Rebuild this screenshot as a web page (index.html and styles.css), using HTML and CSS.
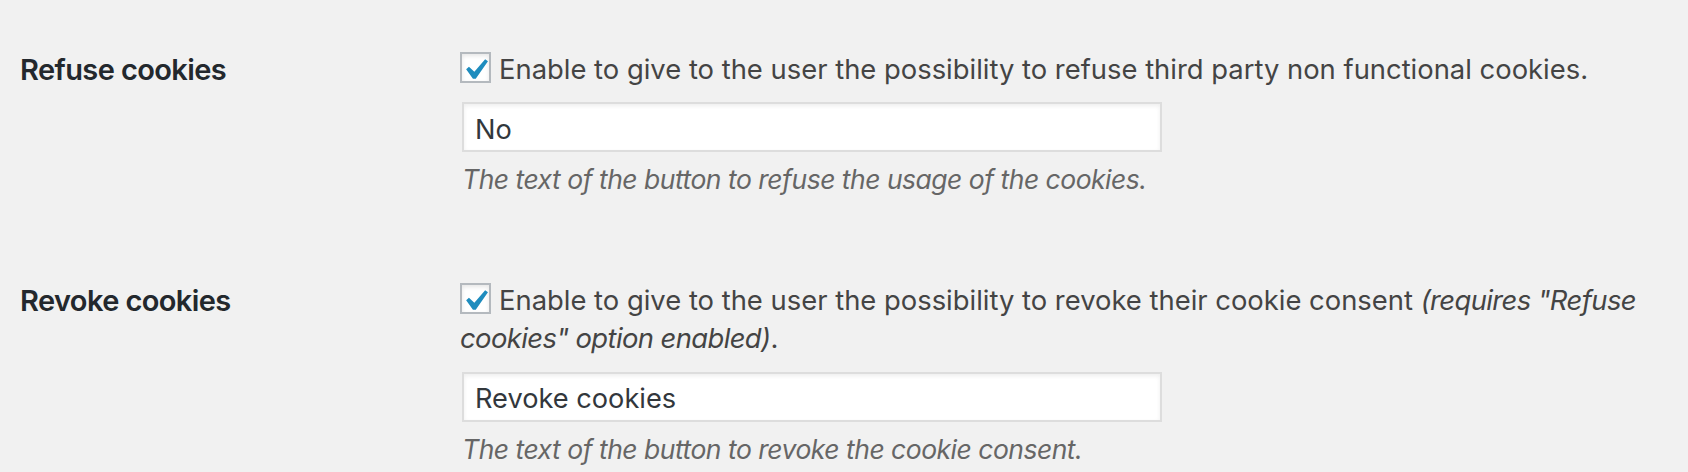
FILE: index.html
```html
<!DOCTYPE html>
<html lang="en">
<head>
<meta charset="utf-8">
<title>Cookie settings</title>
<link rel="stylesheet" href="styles.css">
</head>
<body>
<div class="form-table">
  <div class="row">
    <div class="th">Refuse cookies</div>
    <div class="td">
      <label class="check-line"><span class="cb"><svg class="tick" viewBox="0 0 20 20" width="42" height="42"><path d="M14.83 4.89l1.34.94-5.81 8.38H9.02L5.78 9.67l1.34-1.25 2.57 2.4z"/></svg></span>Enable to give to the user the possibility to refuse third party non functional cookies.</label>
      <input class="regular-text" type="text" value="No" readonly>
      <p class="description">The text of the button to refuse the usage of the cookies.</p>
    </div>
  </div>
  <div class="row">
    <div class="th">Revoke cookies</div>
    <div class="td">
      <label class="check-line"><span class="cb"><svg class="tick" viewBox="0 0 20 20" width="42" height="42"><path d="M14.83 4.89l1.34.94-5.81 8.38H9.02L5.78 9.67l1.34-1.25 2.57 2.4z"/></svg></span>Enable to give to the user the possibility to revoke their cookie consent <em>(requires "Refuse cookies" option enabled)</em>.</label>
      <input class="regular-text" type="text" value="Revoke cookies" readonly>
      <p class="description">The text of the button to revoke the cookie consent.</p>
    </div>
  </div>
</div>
</body>
</html>
```

FILE: styles.css
```css
html, body {
  margin: 0;
  padding: 0;
  background: #f1f1f1;
}

body {
  font-family: Inter, "Noto Sans", sans-serif;
  font-size: 27.4px;
  color: #444;
}

.form-table {
  margin-top: 10px;
}

.row {
  display: grid;
  grid-template-columns: 440px 1fr;
  padding: 40px 0 41.6px 20px;
}

.th {
  font-size: 29px;
  font-weight: 600;
  letter-spacing: -0.6px;
  color: #23282d;
  line-height: 38.4px;
  padding-top: 1px;
}

.td {
  min-width: 0;
}

.check-line {
  display: block;
  line-height: 38.4px;
}

.check-line em {
  font-style: italic;
  letter-spacing: -0.6px;
}

.cb {
  display: inline-block;
  position: relative;
  box-sizing: border-box;
  width: 31px;
  height: 31px;
  margin: 1.6px 8px 0 0;
  vertical-align: top;
  border: 2px solid #b4b9be;
  background: #fff;
  box-shadow: inset 0 2px 4px rgba(0, 0, 0, 0.1);
}

.tick {
  position: absolute;
  left: -7.7px;
  top: -5px;
  fill: #1e8cbe;
}

.regular-text {
  display: block;
  box-sizing: border-box;
  width: 700px;
  height: 50px;
  margin: 13.8px 0 0 2px;
  padding: 4px 11px 0;
  border: 2px solid #ddd;
  box-shadow: inset 0 2px 4px rgba(0, 0, 0, 0.07);
  background: #fff;
  font-family: Inter, "Noto Sans", sans-serif;
  font-size: 27.2px;
  color: #32373c;
  outline: none;
  border-radius: 0;
}

.description {
  margin: 8px 0 0 2px;
  font-size: 26.5px;
  letter-spacing: -0.5px;
  font-style: italic;
  color: #666;
  line-height: 39.2px;
}
```
